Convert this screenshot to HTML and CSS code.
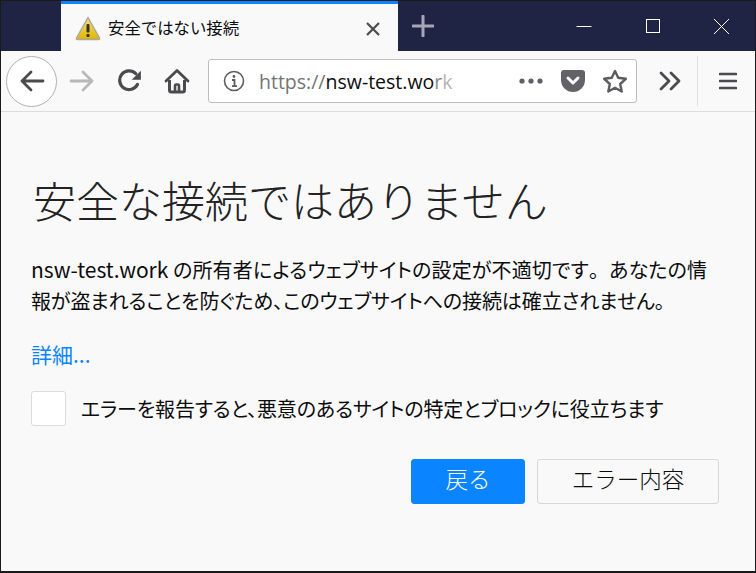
FILE: index.html
```html
<!DOCTYPE html>
<html lang="ja">
<head>
<meta charset="utf-8">
<title>安全ではない接続</title>
<link rel="stylesheet" href="styles.css">
</head>
<body>
<div class="window">
  <header class="titlebar">
    <div class="tab">
      <svg class="warn" width="26" height="26" viewBox="0 0 26 26">
        <defs><linearGradient id="wg" x1="0" y1="0" x2="0" y2="1"><stop offset="0" stop-color="#f6e27a"/><stop offset="1" stop-color="#e0b400"/></linearGradient></defs>
        <path d="M13 2.5 L24.5 23 Q25 24.5 23.5 24.5 H2.5 Q1 24.5 1.500 23 Z" fill="url(#wg)" stroke="#a9a9a0" stroke-width="1.500" stroke-linejoin="round"/>
        <rect x="11.500" y="9" width="3" height="8.500" rx="1" fill="#33302a"/>
        <rect x="11.500" y="19" width="3" height="3" rx="1" fill="#33302a"/>
      </svg>
      <span class="tab-title">安全ではない接続</span>
      <svg class="tab-close" width="16" height="16" viewBox="0 0 16 16"><path d="M2 2 L14 14 M14 2 L2 14" stroke="#4a4a4f" stroke-width="2.200" fill="none"/></svg>
    </div>
    <svg class="newtab" width="22" height="22" viewBox="0 0 22 22"><path d="M11 1 V21 M1 11 H21" stroke="#a5a7b6" stroke-width="3" stroke-linecap="round" fill="none"/></svg>
    <div class="caps">
      <button class="cap"><svg width="16" height="16" viewBox="0 0 16 16"><path d="M0.500 8.500 H15.500" stroke="#fff" stroke-width="1" fill="none"/></svg></button>
      <button class="cap cap-max"><svg width="15" height="15" viewBox="0 0 15 15"><rect x="0.500" y="0.500" width="13" height="13" stroke="#fff" stroke-width="1" fill="none"/></svg></button>
      <button class="cap"><svg width="17" height="17" viewBox="0 0 17 17"><path d="M1 1 L16 16 M16 1 L1 16" stroke="#fff" stroke-width="1" fill="none"/></svg></button>
    </div>
  </header>
  <nav class="toolbar">
    <div class="back"><svg width="26" height="24" viewBox="0 0 26 24"><path d="M24 12 H3 M12 3 L3 12 L12 21" stroke="#4a4a4f" stroke-width="2.800" stroke-linecap="round" stroke-linejoin="round" fill="none"/></svg></div>
    <svg class="forward" width="26" height="24" viewBox="0 0 26 24"><path d="M2 12 H23 M14 3 L23 12 L14 21" stroke="#b8b8ba" stroke-width="2.800" stroke-linecap="round" stroke-linejoin="round" fill="none"/></svg>
    <svg class="reload" width="24" height="24" viewBox="2 2 21 21"><path d="M19 15.500 A8.200 8.200 0 1 1 17.500 6" stroke="#4a4a4f" stroke-width="2.800" stroke-linecap="round" fill="none"/><path d="M22 3.500 V11.500 H14 Z" fill="#4a4a4f"/></svg>
    <svg class="home" width="26" height="26" viewBox="0 0 26 26"><path d="M2 13 L13 2.500 L24 13" stroke="#4a4a4f" stroke-width="2.800" stroke-linecap="round" stroke-linejoin="round" fill="none"/><path d="M5.500 12 V22 Q5.500 24 7.500 24 H18.500 Q20.500 24 20.500 22 V12" stroke="#4a4a4f" stroke-width="3" fill="none"/><path d="M11 24 V18 Q11 16.500 12.200 16.500 H13.800 Q15 16.500 15 18 V24" stroke="#4a4a4f" stroke-width="2.600" fill="none"/></svg>
    <div class="urlbar">
      <svg class="info" width="22" height="22" viewBox="0 0 22 22"><circle cx="11" cy="11" r="9.500" stroke="#5b5b60" stroke-width="1.600" fill="none"/><circle cx="11" cy="6.500" r="1.400" fill="#5b5b60"/><path d="M9 10 H11.500 V16 M9 16.200 H14" stroke="#5b5b60" stroke-width="1.800" fill="none"/></svg>
      <div class="url"><span class="scheme">https://</span><span class="host">nsw-test.wo</span><span class="fade-a">r</span><span class="fade-b">k</span></div>
      <svg class="dots" width="24" height="6" viewBox="0 0 24 6"><circle cx="3" cy="3" r="2.600" fill="#5f5f64"/><circle cx="12" cy="3" r="2.600" fill="#5f5f64"/><circle cx="21" cy="3" r="2.600" fill="#5f5f64"/></svg>
      <svg class="pocket" width="24" height="22" viewBox="0 0 24 22"><path d="M0 3 Q0 0 3 0 H21 Q24 0 24 3 V10 A12 12 0 0 1 0 10 Z" fill="#636367"/><path d="M7 8 L12 13 L17 8" stroke="#fff" stroke-width="3" stroke-linecap="round" stroke-linejoin="round" fill="none"/></svg>
      <svg class="star" width="26" height="24" viewBox="0 0 26 24"><path d="M13 2 L16.200 8.800 L23.800 9.800 L18.200 15 L19.700 22.500 L13 18.800 L6.300 22.500 L7.800 15 L2.200 9.800 L9.800 8.800 Z" stroke="#5b5b60" stroke-width="2.400" stroke-linejoin="round" fill="none"/></svg>
    </div>
    <svg class="more" width="22" height="20" viewBox="0 0 22 20"><path d="M2 2 L10 10 L2 18 M12 2 L20 10 L12 18" stroke="#4a4a4f" stroke-width="2.800" stroke-linecap="round" stroke-linejoin="round" fill="none"/></svg>
    <div class="sep"></div>
    <svg class="menu" width="18" height="18" viewBox="0 0 18 18"><path d="M1 2 H17 M1 9 H17 M1 16 H17" stroke="#4a4a4f" stroke-width="2.600" stroke-linecap="round" fill="none"/></svg>
  </nav>
  <main class="page">
    <h1 class="heading">安全な接続ではありません</h1>
    <p class="desc"><span class="line-a"><span class="latin">nsw-test.work</span> の所有者によるウェブサイトの設定が不適切です<span class="punct">。</span>あなたの情</span><br><span class="line-b">報が盗まれることを防ぐため、このウェブサイトへの接続は確立されません<span class="punct">。</span></span></p>
    <a class="more-link" href="#">詳細...</a>
    <label class="report"><span class="check"></span><span class="report-text">エラーを報告すると、悪意のあるサイトの特定とブロックに役立ちます</span></label>
    <div class="actions">
      <button class="btn primary">戻る</button>
      <button class="btn">エラー内容</button>
    </div>
  </main>
</div>
</body>
</html>
```
FILE: styles.css
```css
* { box-sizing: border-box; }
html, body { margin: 0; height: 100%; }
body { font-family: "Noto Sans CJK JP", "Noto Sans", sans-serif; overflow: hidden; }
.window { width: 756px; height: 573px; border: 1px solid #1a1a1a; border-width: 1px 1px 2px 1px; display: flex; flex-direction: column; background: #f9f9fa; }
.titlebar { height: 50px; flex: none; background: #1f2344; display: flex; align-items: stretch; padding-left: 60px; }
.tab { width: 337px; background: #f9f9fa; border-top: 3px solid #0a84ff; display: flex; align-items: center; padding-left: 14px; }
.warn { flex: none; }
.tab-title { font-size: 16.400px; color: #0c0c0d; margin-left: 7px; flex: 1; line-height: 1; white-space: nowrap; }
.tab-close { margin-right: 17px; margin-top: 2px; }
.newtab { align-self: center; margin-left: 14px; }
.caps { margin-left: auto; display: flex; }
.cap { width: 69px; height: 50px; padding: 0 0 0 2px; border: 0; background: transparent; display: flex; align-items: center; justify-content: center; }
.cap-max { padding-left: 4px; }
.toolbar { height: 61px; flex: none; background: #f9f9fa; border-bottom: 1px solid #dcdcde; display: flex; align-items: center; padding-left: 5px; }
.back { width: 51px; height: 51px; flex: none; border: 1px solid #b1b1b3; border-radius: 50%; background: #fff; display: flex; align-items: center; justify-content: center; margin-right: 12px; }
.forward { margin-right: 23px; }
.reload { margin-right: 22px; }
.home { margin-right: 18px; }
.urlbar { width: 429px; height: 44px; flex: none; background: #fff; border: 1px solid #bebec0; border-radius: 3px; display: flex; align-items: center; padding-left: 14px; }
.info { flex: none; }
.url { flex: 1; font-family: "Open Sans", sans-serif; font-size: 19.500px; margin: 2px 0 0 14px; line-height: 1; white-space: nowrap; color: #0c0c0d; }
.scheme { color: #737373; }
.fade-a { color: #8a8a8a; }
.fade-b { color: #b5b5b5; }
.dots { margin-right: 18px; }
.pocket { margin-right: 17px; }
.star { margin-right: 8px; }
.more { margin-left: 22px; }
.sep { width: 1px; height: 50px; background: #e0e0e2; margin-left: 16px; }
.menu { margin-left: 21px; }
.page { flex: 1; padding: 56px 36px 0 30px; color: #0c0c0d; }
.heading { margin: 0 0 0 2px; font-size: 43px; font-weight: 200; line-height: 62px; color: #222; white-space: nowrap; }
.desc { margin: 24px 0 0; font-size: 20px; line-height: 31px; font-weight: 400; font-feature-settings: "palt"; white-space: nowrap; }
.latin { font-size: 21px; letter-spacing: 0; }
.punct { font-feature-settings: normal; }
.line-a { letter-spacing: 0.150px; }
.line-b { letter-spacing: -0.100px; }
.more-link { display: block; margin-top: 22px; font-size: 21px; line-height: 32px; color: #0a84ff; text-decoration: none; }
.report { display: flex; align-items: center; margin-top: 21px; }
.check { width: 35px; height: 35px; flex: none; border: 1px solid #dcdcde; border-radius: 3px; background: #fff; }
.report-text { margin-left: 15px; font-size: 20px; line-height: 32px; font-feature-settings: "palt"; letter-spacing: -0.150px; white-space: nowrap; }
.actions { display: flex; justify-content: flex-end; gap: 12px; margin-top: 33px; }
.btn { width: 182px; height: 45px; padding: 0 0 7px; border: 1px solid #d7d7db; border-radius: 3px; background: #f9f9fa; font-family: inherit; font-size: 22.500px; font-weight: 300; color: #0c0c0d; }
.btn.primary { width: 114px; background: #0a84ff; border-color: #0a84ff; color: #fff; }
```
